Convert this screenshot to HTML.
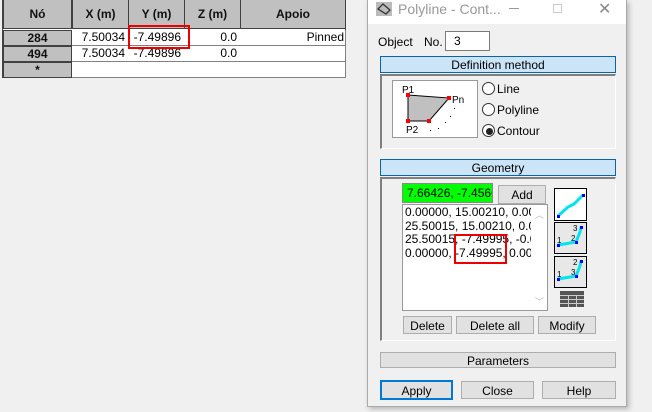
<!DOCTYPE html>
<html><head><meta charset="utf-8"><style>
*{box-sizing:border-box;margin:0;padding:0}
body{width:652px;height:412px;background:#f0f0f0;position:relative;overflow:hidden;font-family:"Liberation Sans",Arial,sans-serif;font-size:11px;color:#000}
.a{position:absolute}
.hc{position:absolute;background:#c0c0c0;border:1px solid #404040;font-weight:bold;font-size:12px;text-align:center;color:#111}
.c{position:absolute;background:#fff;border-right:1px solid #808080;border-bottom:1px solid #808080;text-align:right;padding-right:3px;font-size:12px;line-height:15px}
.btn{position:absolute;background:#e1e1e1;border:1px solid #adadad;text-align:center;font-size:12px}
.bar{position:absolute;background:#cce4f7;border:1px solid #0a64ad;text-align:center;font-size:12px;line-height:16px}
.grp{position:absolute;border:1px solid #fff;border-left:2px solid #808080;border-top:2px solid #808080}
.rad{position:absolute;width:13px;height:13px;border:1px solid #333;border-radius:50%;background:#fff}
</style></head><body>
<div class="a" style="left:2px;top:0;width:344px;height:78px;background:#fff;border-left:1px solid #444;border-right:1px solid #444;border-bottom:1px solid #444"></div>
<div class="hc" style="left:3px;top:-1px;width:69px;height:30px;line-height:28px">Nó</div>
<div class="hc" style="left:72px;top:-1px;width:57px;height:30px;line-height:28px">X (m)</div>
<div class="hc" style="left:128px;top:-1px;width:57px;height:30px;line-height:28px">Y (m)</div>
<div class="hc" style="left:184px;top:-1px;width:57px;height:30px;line-height:28px">Z (m)</div>
<div class="hc" style="left:240px;top:-1px;width:106px;height:30px;line-height:28px">Apoio</div>
<div class="hc" style="left:3px;top:30px;width:69px;height:16px;line-height:15px">284</div>
<div class="hc" style="left:3px;top:46px;width:69px;height:16px;line-height:15px">494</div>
<div class="hc" style="left:3px;top:62px;width:69px;height:16px;line-height:14px">*</div>
<div class="c" style="left:72px;top:30px;width:57px;height:16px">7.50034</div>
<div class="c" style="left:128px;top:30px;width:57px;height:16px">-7.49896</div>
<div class="c" style="left:184px;top:30px;width:57px;height:16px">0.0</div>
<div class="c" style="left:240px;top:30px;width:106px;height:16px;padding-right:1px">Pinned</div>
<div class="c" style="left:72px;top:46px;width:57px;height:16px">7.50034</div>
<div class="c" style="left:128px;top:46px;width:57px;height:16px">-7.49896</div>
<div class="c" style="left:184px;top:46px;width:57px;height:16px">0.0</div>
<div class="c" style="left:240px;top:46px;width:106px;height:16px"></div>
<div class="c" style="left:72px;top:62px;width:57px;height:16px"></div>
<div class="c" style="left:128px;top:62px;width:57px;height:16px"></div>
<div class="c" style="left:184px;top:62px;width:57px;height:16px"></div>
<div class="c" style="left:240px;top:62px;width:106px;height:16px"></div>
<div class="a" style="left:128px;top:25px;width:62px;height:24px;border:2px solid #e00"></div>

<div class="a" style="left:367px;top:0;width:260px;height:407px;background:#f0f0f0;border:1px solid #aaa;box-shadow:2px 2px 5px rgba(0,0,0,.25)"></div>
<div class="a" style="left:368px;top:0;width:258px;height:24px;background:#fff"></div>
<div class="a" style="left:376px;top:2px;width:16px;height:14px;background:#bbb"></div>
<svg class="a" style="left:376px;top:2px" width="16" height="14"><path d="M2 7 L7 2 L14 8 L10 12 Z" fill="none" stroke="#333" stroke-width="1.3"/></svg>
<div class="a" style="left:398px;top:1px;font-size:14px;color:#999">Polyline - Cont...</div>
<div class="a" style="left:509px;top:8px;width:10px;height:1px;background:#999"></div>
<div class="a" style="left:553px;top:4px;width:9px;height:9px;border:1px solid #ccc"></div>
<div class="a" style="left:598px;top:-1px;font-size:16px;color:#888">✕</div>
<div class="a" style="left:378px;top:35px;font-size:12px">Object</div>
<div class="a" style="left:424px;top:35px;font-size:12px">No.</div>
<div class="a" style="left:445px;top:31px;width:45px;height:20px;background:#fff;border:1px solid #7a7a7a;padding:2px 0 0 8px;font-size:12px">3</div>
<div class="bar" style="left:380px;top:56px;width:236px;height:17px">Definition method</div>
<div class="grp" style="left:380px;top:74px;width:236px;height:75px"></div>
<div class="a" style="left:392px;top:80px;width:86px;height:58px;background:#fff;border:1px solid #999"></div>
<svg class="a" style="left:392px;top:80px" width="86" height="58">
<polygon points="16,15 57,18 37,41 16,41" fill="#c0c0c0" stroke="#000" stroke-width="1"/>
<rect x="14" y="13" width="4" height="4" fill="red"/><rect x="55" y="16" width="4" height="4" fill="red"/>
<rect x="35" y="39" width="4" height="4" fill="red"/><rect x="14" y="39" width="4" height="4" fill="red"/>
<text x="10" y="13" font-size="10" font-family="Liberation Sans">P1</text>
<text x="60" y="23" font-size="10" font-family="Liberation Sans">Pn</text>
<text x="14" y="53" font-size="10" font-family="Liberation Sans">P2</text>
<g fill="#000"><rect x="62" y="28" width="1" height="1"/><rect x="58" y="36" width="1" height="1"/><rect x="53" y="42" width="1" height="1"/><rect x="46" y="48" width="1" height="1"/><rect x="38" y="50" width="1" height="1"/></g>
</svg>
<div class="rad" style="left:482px;top:82px"></div><div class="a" style="left:497px;top:82px;font-size:12px">Line</div>
<div class="rad" style="left:482px;top:103px"></div><div class="a" style="left:497px;top:103px;font-size:12px">Polyline</div>
<div class="rad" style="left:482px;top:124px"></div><div class="a" style="left:486px;top:128px;width:7px;height:7px;border-radius:50%;background:#222"></div><div class="a" style="left:497px;top:124px;font-size:12px">Contour</div>
<div class="bar" style="left:380px;top:159px;width:236px;height:17px">Geometry</div>
<div class="grp" style="left:380px;top:177px;width:236px;height:164px"></div>
<div class="a" style="left:402px;top:183px;width:91px;height:20px;background:#00ff00;border:1px solid #888;padding:2px 0 0 4px;font-size:12px;overflow:hidden;white-space:nowrap">7.66426, -7.4566</div>
<div class="btn" style="left:498px;top:185px;width:48px;height:19px;line-height:18px">Add</div>
<div class="a" style="left:402px;top:204px;width:146px;height:107px;background:#fff;border:1px solid #999"></div>
<div class="a" style="left:405px;top:206px;width:126px;overflow:hidden;white-space:nowrap;font-size:12px;line-height:13.5px">0.00000, 15.00210, 0.000<br>25.50015, 15.00210, 0.00<br>25.50015, -7.49995, -0.0<br>0.00000, -7.49995, 0.000</div>
<div class="a" style="left:535px;top:208px;font-size:9px;color:#bbb">︿</div>
<div class="a" style="left:535px;top:295px;font-size:9px;color:#bbb">﹀</div>
<div class="a" style="left:454px;top:234px;width:53px;height:30px;border:2px solid #e00"></div>
<div class="a" style="left:554px;top:188px;width:33px;height:33px;background:#fff;border:1px solid #000"></div>
<svg class="a" style="left:554px;top:188px" width="33" height="33"><path d="M4 28 L14 19 L20 16 L29 7" stroke="#00e5ee" stroke-width="3" fill="none"/><rect x="3" y="27" width="3" height="3" fill="#00f"/><rect x="28" y="6" width="3" height="3" fill="#00f"/></svg>
<div class="a" style="left:554px;top:222px;width:33px;height:32px;background:#e8e8e8;border:1px solid #000"></div>
<svg class="a" style="left:554px;top:222px" width="33" height="32"><path d="M4 23 L10 22 L22 20 L26 10 L27 5" stroke="#00e5ee" stroke-width="3" fill="none"/><rect x="3" y="22" width="3" height="3" fill="#00f"/><rect x="21" y="19" width="3" height="3" fill="#00f"/><rect x="26" y="4" width="3" height="3" fill="#00f"/><text x="3" y="21" font-size="8">1</text><text x="17" y="19" font-size="8">2</text><text x="19" y="9" font-size="8">3</text></svg>
<div class="a" style="left:554px;top:256px;width:33px;height:32px;background:#e8e8e8;border:1px solid #000"></div>
<svg class="a" style="left:554px;top:256px" width="33" height="32"><path d="M4 23 L10 22 L22 20 L26 10 L27 5" stroke="#00e5ee" stroke-width="3" fill="none"/><rect x="3" y="22" width="3" height="3" fill="#00f"/><rect x="21" y="19" width="3" height="3" fill="#00f"/><rect x="26" y="4" width="3" height="3" fill="#00f"/><text x="3" y="21" font-size="8">1</text><text x="17" y="19" font-size="8">3</text><text x="19" y="9" font-size="8">2</text></svg>
<svg class="a" style="left:560px;top:291px" width="24" height="16"><rect x="0" y="0" width="24" height="16" fill="#555"/><g stroke="#ccc" stroke-width="1"><path d="M0 4.5H24M0 8.5H24M0 12.5H24M8.5 4V16M16.5 4V16"/></g></svg>
<div class="btn" style="left:403px;top:316px;width:49px;height:18px;line-height:18px">Delete</div>
<div class="btn" style="left:456px;top:316px;width:78px;height:18px;line-height:18px">Delete all</div>
<div class="btn" style="left:538px;top:316px;width:58px;height:18px;line-height:18px">Modify</div>
<div class="btn" style="left:380px;top:352px;width:236px;height:16px;line-height:16px">Parameters</div>
<div class="btn" style="left:380px;top:380px;width:73px;height:20px;line-height:18px;border:2px solid #0078d7">Apply</div>
<div class="btn" style="left:461px;top:381px;width:73px;height:18px;line-height:18px">Close</div>
<div class="btn" style="left:542px;top:381px;width:74px;height:18px;line-height:18px">Help</div>
</body></html>
